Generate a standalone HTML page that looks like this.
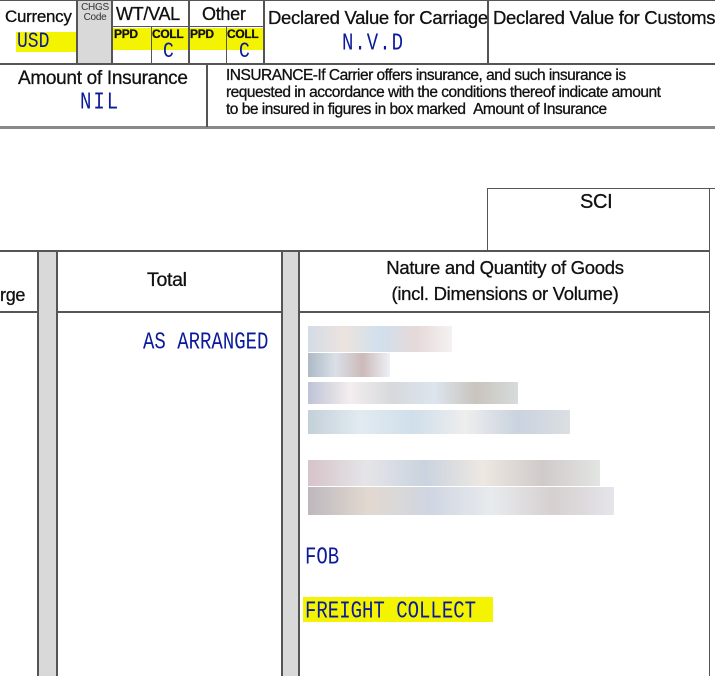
<!DOCTYPE html><html><head><style>
body{margin:0;width:715px;height:676px;position:relative;background:#fff;overflow:hidden;font-family:"Liberation Sans",sans-serif;color:#111}
div{position:absolute;box-sizing:border-box}
.h{height:2px;background:#555}
.v{width:2px;background:#555}
.t{white-space:nowrap;letter-spacing:-0.3px;-webkit-text-stroke:0.3px #111}
.m{font-family:"Liberation Mono",monospace;color:#0a1a9a;white-space:nowrap;transform:scaleY(1.25);transform-origin:0 50%}
.y{background:#f4f400}
.g{background:#d9d9d9}
</style></head><body>
<div class="y" style="left:16px;top:32px;width:62px;height:20px"></div>
<div class="y" style="left:113px;top:28px;width:150px;height:22px"></div>
<div class="g" style="left:77px;top:0;width:35px;height:64px"></div>
<div class="y" style="left:303px;top:597px;width:190px;height:25px"></div>
<div class="h" style="left:0;top:0;width:715px;height:1px"></div>
<div class="h" style="left:0;top:63px;width:715px"></div>
<div class="h" style="left:0;top:126px;width:715px;height:3px;background:#888"></div>
<div class="v" style="left:76px;top:0;height:64px"></div>
<div class="v" style="left:111px;top:0;height:64px"></div>
<div class="v" style="left:188px;top:0;height:64px"></div>
<div class="v" style="left:263px;top:0;height:64px"></div>
<div class="v" style="left:487px;top:0;height:64px"></div>
<div class="h" style="left:112px;top:26px;width:151px;height:1px"></div>
<div class="v" style="left:151px;top:26px;height:38px;width:1px"></div>
<div class="v" style="left:226px;top:26px;height:38px;width:1px"></div>
<div class="v" style="left:206px;top:64px;height:63px"></div>
<div class="t" style="left:5px;top:7px;font-size:17px">Currency</div>
<div class="t" style="left:78px;top:3px;font-size:10px;line-height:10px;text-align:center;width:34px;color:#333;-webkit-text-stroke:0">CHGS<br>Code</div>
<div class="t" style="left:116px;top:4px;font-size:18px">WT/VAL</div>
<div class="t" style="left:202px;top:4px;font-size:18px">Other</div>
<div class="t" style="left:114px;top:27px;font-size:12px;font-weight:bold">PPD</div>
<div class="t" style="left:152px;top:27px;font-size:12px;font-weight:bold">COLL</div>
<div class="t" style="left:190px;top:27px;font-size:12px;font-weight:bold">PPD</div>
<div class="t" style="left:227px;top:27px;font-size:12px;font-weight:bold">COLL</div>
<div class="m" style="left:17px;top:32px;font-size:18px">USD</div>
<div class="m" style="left:163px;top:42px;font-size:18px">C</div>
<div class="m" style="left:239px;top:42px;font-size:18px">C</div>
<div class="t" style="left:268px;top:7px;font-size:18.5px">Declared Value for Carriage</div>
<div class="t" style="left:493px;top:7px;font-size:18.5px">Declared Value for Customs</div>
<div class="m" style="left:342px;top:32px;font-size:19px;letter-spacing:1px">N.V.D</div>
<div class="t" style="left:18px;top:68px;font-size:19px">Amount of Insurance</div>
<div class="m" style="left:80px;top:91px;font-size:19px;letter-spacing:2px">NIL</div>
<div class="t" style="left:226px;top:67px;font-size:15.5px;line-height:17px;letter-spacing:-0.5px">INSURANCE-If Carrier offers insurance, and such insurance is<br>requested in accordance with the conditions thereof indicate amount<br>to be insured in figures in box marked &nbsp;Amount of Insurance</div>
<div class="h" style="left:487px;top:188px;width:228px;height:1px"></div>
<div class="v" style="left:487px;top:188px;height:63px;width:1px"></div>
<div class="v" style="left:709px;top:188px;height:488px;width:1px"></div>
<div class="t" style="left:580px;top:191px;font-size:20px">SCI</div>
<div class="g" style="left:38px;top:251px;width:19px;height:425px"></div>
<div class="g" style="left:282px;top:251px;width:18px;height:425px"></div>
<div class="h" style="left:0;top:250px;width:710px"></div>
<div class="h" style="left:0;top:311px;width:38px"></div>
<div class="h" style="left:57px;top:311px;width:225px"></div>
<div class="h" style="left:300px;top:311px;width:410px"></div>
<div class="v" style="left:37px;top:250px;height:426px"></div>
<div class="v" style="left:56px;top:250px;height:426px"></div>
<div class="v" style="left:281px;top:250px;height:426px"></div>
<div class="v" style="left:298px;top:250px;height:426px"></div>
<div class="t" style="left:0;top:285px;font-size:18px">rge</div>
<div class="t" style="left:147px;top:269px;font-size:19.5px">Total</div>
<div class="t" style="left:300px;top:255px;width:410px;font-size:18.5px;line-height:26px;text-align:center">Nature and Quantity of Goods<br>(incl. Dimensions or Volume)</div>
<div class="m" style="left:143px;top:331px;font-size:19px">AS ARRANGED</div>
<div style="left:308px;top:326px;width:144px;height:26px;background:linear-gradient(90deg,#c9d3e0,#e8dcd6,#c4d8e8,#e0cfd0,#f2eeee);opacity:.8"></div>
<div style="left:308px;top:353px;width:82px;height:24px;background:linear-gradient(90deg,#98a8b8,#d0d8e0,#c0a8a8,#e8eef4);opacity:.8"></div>
<div style="left:308px;top:382px;width:210px;height:22px;background:linear-gradient(90deg,#a8b0c8,#f0e8e8,#c8ccd0,#d0dce8,#b8b0a8,#c8d0d0);opacity:.75"></div>
<div style="left:308px;top:410px;width:262px;height:24px;background:linear-gradient(90deg,#b0c0cc,#d8e4ec,#c0d4e4,#e8e8e8,#b8c4d4,#d0d4d8);opacity:.75"></div>
<div style="left:308px;top:460px;width:292px;height:26px;background:linear-gradient(90deg,#c8b0b8,#dcdce0,#b8c4d4,#e8e0d8,#c0b8b8,#d8dcd8);opacity:.75"></div>
<div style="left:308px;top:487px;width:306px;height:28px;background:linear-gradient(90deg,#a8a0a8,#d8ccc0,#c0c8d8,#e0e4e8,#c8c0c0,#dcdce4);opacity:.75"></div>
<div class="m" style="left:305px;top:546px;font-size:19px">FOB</div>
<div class="m" style="left:305px;top:600px;font-size:19px">FREIGHT COLLECT</div>
</body></html>
